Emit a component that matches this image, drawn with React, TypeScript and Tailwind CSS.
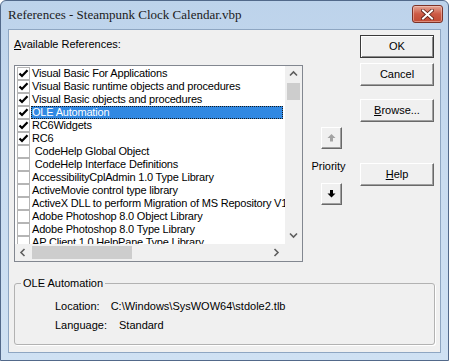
import React from "react";

type RefItem = { label: string; checked?: boolean; selected?: boolean; indent?: boolean };

const references: RefItem[] = [
    { label: "Visual Basic For Applications", checked: true },
    { label: "Visual Basic runtime objects and procedures", checked: true },
    { label: "Visual Basic objects and procedures", checked: true },
    { label: "OLE Automation", checked: true, selected: true },
    { label: "RC6Widgets", checked: true },
    { label: "RC6", checked: true },
    { label: "CodeHelp Global Object", indent: true },
    { label: "CodeHelp Interface Definitions", indent: true },
    { label: "AccessibilityCplAdmin 1.0 Type Library" },
    { label: "ActiveMovie control type library" },
    { label: "ActiveX DLL to perform Migration of MS Repository V1 Databases" },
    { label: "Adobe Photoshop 8.0 Object Library" },
    { label: "Adobe Photoshop 8.0 Type Library" },
    { label: "AP Client 1.0 HelpPane Type Library" },
];

// classic 3D push button
const bevel =
    "flex items-center justify-center bg-[#f0f0f0] border border-t-white border-l-white border-r-[#696969] border-b-[#696969] shadow-[inset_-1px_-1px_0_#a0a0a0] text-black";

function Chevron({ dir }: { dir: "up" | "down" | "left" | "right" }) {
    const paths = {
        up: "M1 5.5 L4.5 2 L8 5.5",
        down: "M1 2.5 L4.5 6 L8 2.5",
        left: "M5.5 1 L2 4.5 L5.5 8",
        right: "M2.5 1 L6 4.5 L2.5 8",
    };
    return (
        <svg width="9" height="9" viewBox="0 0 9 9" fill="none">
            <path d={paths[dir]} stroke="#5e5e5e" strokeWidth={1.6} />
        </svg>
    );
}

function CheckBox({ checked }: { checked?: boolean }) {
    return (
        <span className="flex h-[13px] w-[13px] shrink-0 items-center justify-center border border-[#b5b5b5] bg-white">
            {checked && (
                <svg width="11" height="11" viewBox="0 0 11 11" fill="none">
                    <path d="M1.5 5.5 L4 8 L9.5 2.2" stroke="#000" strokeWidth={2.2} />
                </svg>
            )}
        </span>
    );
}

function ReferenceRow({ item }: { item: RefItem }) {
    return (
        <div className="flex h-[13px] items-center whitespace-nowrap pl-[2px] tracking-[-0.2px]">
            <CheckBox checked={item.checked} />
            <span
                className={
                    item.selected
                        ? "ml-[1px] mr-[2px] flex h-[13px] flex-1 items-center border border-dotted border-[#1a1a1a] bg-[#3088e2] text-white"
                        : "ml-[1px] flex h-[13px] items-center border border-transparent"
                }
            >
                {item.indent ? "\u00a0" : ""}
                {item.label}
            </span>
        </div>
    );
}

function ReferenceList() {
    return (
        <div className="flex h-[197px] w-[289px] flex-col border border-[#828790] bg-white">
            <div className="flex h-[178px]">
                <div className="flex-1 overflow-hidden pt-[1px]">
                    {references.map((item) => (
                        <ReferenceRow key={item.label} item={item} />
                    ))}
                </div>
                <div className="flex w-[17px] flex-col bg-[#f0f0f0]">
                    <div className="flex h-[17px] items-center justify-center">
                        <Chevron dir="up" />
                    </div>
                    <div className="mx-[2px] h-[17px] bg-[#cdcdcd]" />
                    <div className="flex-1" />
                    <div className="flex h-[17px] items-center justify-center">
                        <Chevron dir="down" />
                    </div>
                </div>
            </div>
            <div className="flex h-[17px] bg-[#f0f0f0]">
                <div className="flex w-[17px] items-center justify-center">
                    <Chevron dir="left" />
                </div>
                <div className="my-[2px] w-[100px] bg-[#cdcdcd]" />
                <div className="flex-1" />
                <div className="flex w-[17px] items-center justify-center">
                    <Chevron dir="right" />
                </div>
                <div className="w-[17px]" />
            </div>
        </div>
    );
}

function ArrowButton({ dir, disabled }: { dir: "up" | "down"; disabled?: boolean }) {
    const d = dir === "up" ? "M4.5 1 L8.5 5 H6 V8.5 H3 V5 H0.5 Z" : "M4.5 8.5 L8.5 4.5 H6 V1 H3 V4.5 H0.5 Z";
    return (
        <div className={`${bevel} h-[22px] w-[21px]`}>
            <svg width="9" height="10" viewBox="0 0 9 10">
                <path d={d} fill={disabled ? "#a3a3a3" : "#000"} />
            </svg>
        </div>
    );
}

export default function App() {
    return (
        <div className="flex h-[361px] w-[449px] flex-col rounded-t-[6px] border border-[#52698a] bg-gradient-to-b from-[#bdd3eb] via-[#c9dcf0] to-[#cfe1f3] font-['Liberation_Sans',Arial,sans-serif] text-[11px] text-black">
            {/* title bar */}
            <div className="flex h-[28px] shrink-0 items-start justify-between pl-[7px] pr-[5px]">
                <span className="mt-[6px] font-['Liberation_Serif','Times_New_Roman',serif] text-[13px] leading-[16px] text-[#1b1b1b]">
                    References - Steampunk Clock Calendar.vbp
                </span>
                <div className="mt-[4px] flex h-[18px] w-[31px] items-center justify-center rounded-[3px] border border-[#7c3227] bg-gradient-to-b from-[#e3a596] via-[#cc5a45] to-[#c14a33] shadow-[inset_0_0_0_1px_rgba(255,220,210,0.45)]">
                    <svg width="13" height="11" viewBox="0 0 13 11">
                        <path d="M2 1.5 L11 9.5 M11 1.5 L2 9.5" stroke="#5a1d14" strokeWidth={3.6} strokeLinecap="square" />
                        <path d="M2 1.5 L11 9.5 M11 1.5 L2 9.5" stroke="#fff" strokeWidth={2} strokeLinecap="square" />
                    </svg>
                </div>
            </div>

            {/* client area */}
            <div className="mx-[7px] mb-[7px] flex flex-1 flex-col border border-[#8ea6c2] bg-[#f0f0f0] pl-[5px] pr-[6px] pt-[5px]">
                <div className="flex">
                    <div className="flex w-[289px] flex-col">
                        <div className="mt-[2px] h-[14px] leading-[14px]">
                            <span className="underline">A</span>vailable References:
                        </div>
                        <div className="mt-[14px]">
                            <ReferenceList />
                        </div>
                    </div>

                    <div className="flex w-[57px] flex-col items-center pt-[92px]">
                        <ArrowButton dir="up" disabled />
                        <div className="mt-[10px] h-[14px] pr-[6px] leading-[14px]">Priority</div>
                        <div className="mt-[10px]">
                            <ArrowButton dir="down" />
                        </div>
                    </div>

                    <div className="flex w-[74px] flex-col">
                        <div className="flex h-[23px] w-[74px] items-center justify-center border border-[#3a3a3a] bg-[#f0f0f0] shadow-[inset_1px_1px_0_#fff,inset_-1px_-1px_0_#8a8a8a]">
                            OK
                        </div>
                        <div className={`${bevel} mt-[5px] h-[23px] w-[74px]`}>Cancel</div>
                        <div className={`${bevel} mt-[13px] h-[23px] w-[74px]`}>
                            <span>
                                <span className="underline">B</span>rowse...
                            </span>
                        </div>
                        <div className={`${bevel} mt-[41px] h-[23px] w-[74px]`}>
                            <span>
                                <span className="underline">H</span>elp
                            </span>
                        </div>
                    </div>
                </div>

                <fieldset className="mt-[14px] h-[69px] w-[421px] rounded-[3px] border border-[#b2b2b2] shadow-[1px_1px_0_#fff]">
                    <legend className="ml-[6px] px-[2px] leading-[14px]">OLE Automation</legend>
                    <div className="flex flex-col gap-[5px] pl-[40px] pt-[9px]">
                        <div className="flex h-[14px] items-center gap-[11px]">
                            <span>Location:</span>
                            <span>C:\Windows\SysWOW64\stdole2.tlb</span>
                        </div>
                        <div className="flex h-[14px] items-center gap-[12px]">
                            <span>Language:</span>
                            <span>Standard</span>
                        </div>
                    </div>
                </fieldset>
            </div>
        </div>
    );
}
